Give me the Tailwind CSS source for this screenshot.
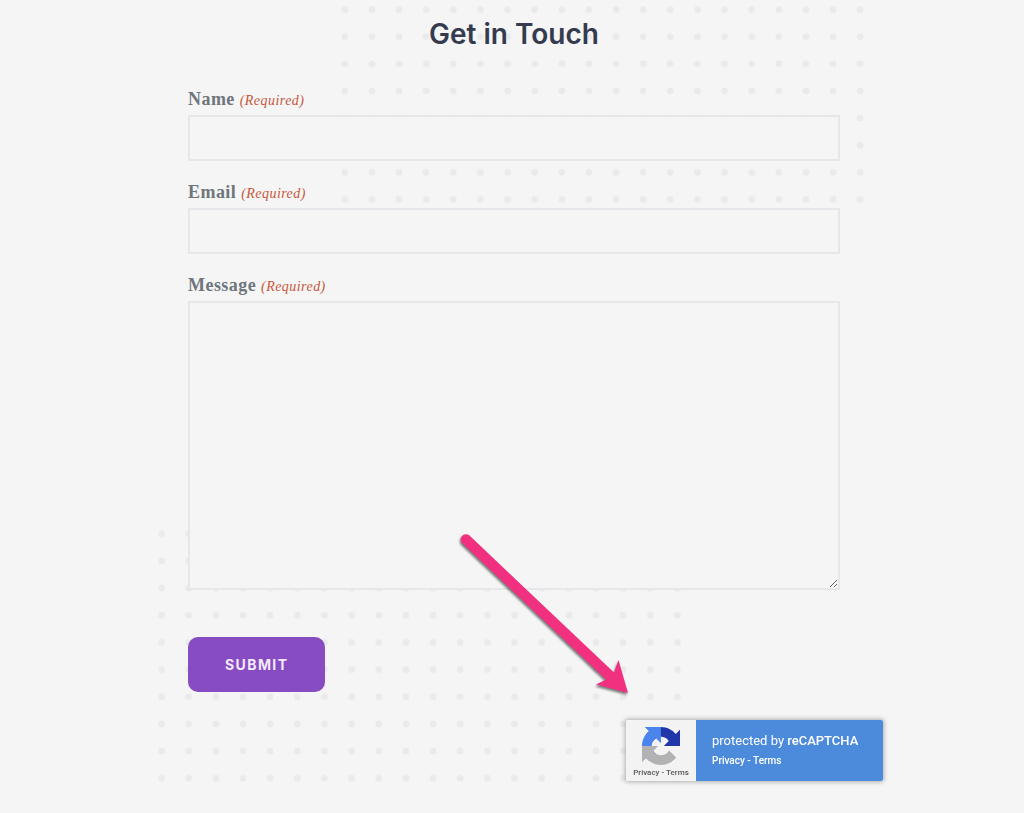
<!DOCTYPE html>
<html lang="en">
<head>
<meta charset="utf-8">
<meta name="viewport" content="width=device-width, initial-scale=1">
<title>Get in Touch</title>
<script src="https://cdn.jsdelivr.net/npm/@tailwindcss/browser@4"></script>
</head>
<body class="min-h-screen bg-[#f5f5f5] font-['Liberation_Serif',serif]">
<main class="overflow-hidden pl-1">
  <div class="relative isolate mx-auto max-w-[652px] pt-4 pb-30">
    <!-- Dotted backdrops -->
    <svg class="absolute -top-1 left-[143px] -z-10 h-[217px] w-[543px]" viewBox="0 0 20 8" aria-hidden="true">
      <defs><pattern id="dots" width="1" height="1" patternUnits="userSpaceOnUse"><circle cx="0.5" cy="0.5" r="0.125" fill="#eaeaed"/></pattern></defs>
      <rect width="20" height="8" fill="url(#dots)"/>
    </svg>
    <svg class="absolute top-[520px] -left-10 -z-10 h-[272px] w-[543px]" viewBox="0 0 20 10" aria-hidden="true">
      <rect width="20" height="10" fill="url(#dots)"/>
    </svg>

    <h1 class="text-center font-['Inter',sans-serif] text-[28px] leading-9 font-semibold text-[#343b4f]">Get in Touch</h1>

    <form class="mt-[35px] flex flex-col gap-[19px]" onsubmit="return false">
      <div class="flex flex-col gap-1">
        <label for="name" class="text-lg leading-6 font-bold tracking-wide text-[#6f757c]">Name <span class="text-sm leading-none font-normal text-[#c5573a] italic">(Required)</span></label>
        <input id="name" type="text" required class="h-[46px] w-full border-2 border-[#e6e7eb] bg-[#f5f5f5] px-3 outline-none">
      </div>
      <div class="flex flex-col gap-1">
        <label for="email" class="text-lg leading-6 font-bold tracking-wide text-[#6f757c]">Email <span class="text-sm leading-none font-normal text-[#c5573a] italic">(Required)</span></label>
        <input id="email" type="email" required class="h-[46px] w-full border-2 border-[#e6e7eb] bg-[#f5f5f5] px-3 outline-none">
      </div>
      <div class="flex flex-col gap-1">
        <label for="message" class="text-lg leading-6 font-bold tracking-wide text-[#6f757c]">Message <span class="text-sm leading-none font-normal text-[#c5573a] italic">(Required)</span></label>
        <textarea id="message" required class="block h-[289px] w-full resize border-2 border-[#e6e7eb] bg-[#f5f5f5] p-3 outline-none"></textarea>
      </div>
      <button type="submit" class="mt-7 self-start rounded-[10px] bg-[#884cc2] px-[37px] py-4 font-['Inter',sans-serif] text-sm leading-[23px] font-bold tracking-widest text-[#f3e9fb]">SUBMIT</button>
    </form>

    <!-- Arrow pointing at the badge -->
    <svg class="pointer-events-none absolute top-[525px] left-[264px] h-[180px] w-[184px] drop-shadow-[-1px_2px_1px_rgb(0_0_0/0.5)]" viewBox="452 525 184 180" aria-hidden="true">
      <path d="M469.500 535.500L614 672.500L618.500 660L628 693L596 684.500L606 679.500L462.500 543.500A5.200 5.200 0 0 1 469.500 535.500Z" fill="#f1307f"/>
    </svg>
  </div>
</main>

<aside aria-label="reCAPTCHA" class="fixed right-[141px] bottom-8 flex h-[61px] w-[257px] overflow-hidden rounded-xs font-['Roboto',sans-serif] shadow-[0_0_4px_1px_rgb(128_128_128/0.6)]">
  <div class="flex w-[70px] flex-col items-center bg-[#f3f3f4] pt-[7px]">
    <svg class="size-[38px]" viewBox="0 0 64 64" aria-hidden="true">
      <path fill="#2137a9" d="M64 31.955l-.033-1.37V4.687l-7.16 7.16C50.948 4.674 42.033.093 32.05.093c-10.4 0-19.622 4.96-25.458 12.64l11.736 11.86a15.55 15.55 0 0 1 4.754-5.334c2.05-1.6 4.952-2.906 8.968-2.906.485 0 .86.057 1.135.163 4.976.393 9.288 3.14 11.828 7.124l-8.307 8.307L64 31.953"/>
      <path fill="#4a84ec" d="M31.862.094l-1.37.033H4.594l7.16 7.16C4.58 13.147 0 22.06 0 32.046c0 10.4 4.96 19.622 12.64 25.458L24.5 45.768a15.55 15.55 0 0 1-5.334-4.754c-1.6-2.05-2.906-4.952-2.906-8.968 0-.485.057-.86.163-1.135.393-4.976 3.14-9.288 7.124-11.828l8.307 8.307L31.86.095"/>
      <path fill="#b2b2b2" d="M.001 32.045l.033 1.37v25.898l7.16-7.16c5.86 7.173 14.774 11.754 24.76 11.754 10.4 0 19.622-4.96 25.458-12.64l-11.736-11.86a15.55 15.55 0 0 1-4.754 5.334c-2.05 1.6-4.952 2.906-8.968 2.906-.485 0-.86-.057-1.135-.163-4.976-.393-9.288-3.14-11.828-7.124l8.307-8.307c-10.522.04-22.4.066-27.295-.005"/>
    </svg>
    <p class="text-[8px] leading-[15px] font-medium whitespace-nowrap text-[#555]"><a href="#privacy">Privacy</a> - <a href="#terms">Terms</a></p>
  </div>
  <div class="flex flex-1 flex-col bg-[#4c8adb] pt-[13px] pl-4 whitespace-nowrap text-white">
    <p class="text-[13px] leading-4">protected by <strong class="font-medium">reCAPTCHA</strong></p>
    <p class="mt-1 text-[10px] leading-4 font-medium"><a href="#privacy">Privacy</a> - <a href="#terms">Terms</a></p>
  </div>
</aside>
</body>
</html>
